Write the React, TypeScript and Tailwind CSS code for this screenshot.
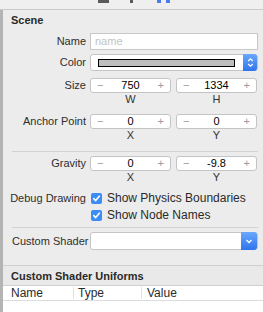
import React from "react";

const font = { fontFamily: '"Liberation Sans", Arial, sans-serif' };

function Stepper({ value }: { value: string }) {
  return (
    <div className="flex h-[15px] w-[81px] items-center rounded-[3px] border border-[#c4c4c4] bg-white px-[6px] text-[11px] leading-none">
      <span className="text-[#9a9a9a]">−</span>
      <span className="flex-1 text-center text-black">{value}</span>
      <span className="text-[#9a9a9a]">+</span>
    </div>
  );
}

function StepperPair({ a, b, la, lb }: { a: string; b: string; la: string; lb: string }) {
  return (
    <div className="flex flex-col">
      <div className="flex gap-[5px]">
        <Stepper value={a} />
        <Stepper value={b} />
      </div>
      <div className="flex gap-[5px] text-[11px] leading-[12px] text-[#333]">
        <div className="w-[81px] text-center">{la}</div>
        <div className="w-[81px] text-center">{lb}</div>
      </div>
    </div>
  );
}

function Check() {
  return (
    <div className="flex h-[11px] w-[11px] items-center justify-center rounded-[2px] bg-[#3b8df5]">
      <svg width="9" height="9" viewBox="0 0 9 9">
        <path d="M1.8 4.6 L3.7 6.6 L7.3 2.2" fill="none" stroke="white" strokeWidth="1.6" strokeLinecap="round" strokeLinejoin="round" />
      </svg>
    </div>
  );
}

export default function App() {
  return (
    <div className="flex h-[312px] w-[263px] flex-col overflow-hidden bg-[#ececec] text-[11px] text-[#2e2e2e]" style={font}>
      <div className="relative h-[10px] shrink-0 border-b border-[#c9c9c9] bg-[#efefef]">
        <div className="absolute left-[98px] top-0 h-[3px] w-[11px] bg-[#5a5a5a]" />
        <div className="absolute left-[130px] top-0 h-[3px] w-[3px] bg-[#5a5a5a]" />
        <div className="absolute left-[157px] top-0 h-[3px] w-[4px] bg-[#4a7de8]" />
        <div className="absolute left-[166px] top-0 h-[3px] w-[4px] bg-[#4a7de8]" />
      </div>
      <div className="flex flex-1">
        <div className="w-[3px] shrink-0 bg-[#b4b4b4]" />
        <div className="flex flex-1 flex-col">
          <div className="pl-[8px] pt-[4px] text-[11px] font-bold leading-[13px] text-[#2a2a2a]">Scene</div>

          <div className="mt-[6px] flex items-center">
            <div className="w-[83px] text-right">Name</div>
            <div className="ml-[4px] flex h-[17px] w-[168px] items-center border border-[#c8c8c8] bg-white px-[4px] text-[#c2c2c2]">name</div>
          </div>

          <div className="mt-[4px] flex items-center">
            <div className="w-[83px] text-right">Color</div>
            <div className="ml-[4px] flex h-[17px] w-[168px] items-center rounded-[3px] border border-[#c4c4c4] bg-white">
              <div className="ml-[7px] h-[8px] w-[137px] border border-black bg-[#bdbdbd]" />
              <div className="ml-auto flex h-[17px] w-[14px] items-center justify-center rounded-r-[3px] bg-gradient-to-b from-[#6aa8fa] to-[#2f74ec]">
                <svg width="7" height="11" viewBox="0 0 7 11">
                  <path d="M1.2 4 L3.5 1.8 L5.8 4 M1.2 7 L3.5 9.2 L5.8 7" fill="none" stroke="white" strokeWidth="1.2" />
                </svg>
              </div>
            </div>
          </div>

          <div className="mt-[7px] flex items-start">
            <div className="w-[83px] pt-[1px] text-right leading-[13px]">Size</div>
            <div className="ml-[4px]">
              <StepperPair a="750" b="1334" la="W" lb="H" />
            </div>
          </div>

          <div className="mt-[9px] flex items-start">
            <div className="w-[83px] pt-[1px] text-right leading-[13px]">Anchor Point</div>
            <div className="ml-[4px]">
              <StepperPair a="0" b="0" la="X" lb="Y" />
            </div>
          </div>

          <div className="ml-[9px] mr-[5px] mt-[10px] h-px bg-[#d2d2d2]" />

          <div className="mt-[4px] flex items-start">
            <div className="w-[83px] pt-[1px] text-right leading-[13px]">Gravity</div>
            <div className="ml-[4px]">
              <StepperPair a="0" b="-9.8" la="X" lb="Y" />
            </div>
          </div>

          <div className="mt-[8px] flex h-[14px] items-center">
            <div className="w-[83px] text-right">Debug Drawing</div>
            <div className="ml-[5px] flex items-center gap-[5px]">
              <Check />
              <span className="text-[12px] text-[#2a2a2a]">Show Physics Boundaries</span>
            </div>
          </div>

          <div className="mt-[3px] flex h-[14px] items-center">
            <div className="ml-[88px] flex items-center gap-[5px]">
              <Check />
              <span className="text-[12px] text-[#2a2a2a]">Show Node Names</span>
            </div>
          </div>

          <div className="ml-[9px] mr-[5px] mt-[5px] h-px bg-[#d2d2d2]" />

          <div className="mt-[4px] flex items-center">
            <div className="w-[83px] whitespace-nowrap pl-[9px] text-left">Custom Shader</div>
            <div className="ml-[4px] flex h-[18px] w-[168px] items-center rounded-[3px] border border-[#c4c4c4] bg-white">
              <div className="ml-auto flex h-[18px] w-[16px] items-center justify-center rounded-r-[3px] bg-gradient-to-b from-[#6aa8fa] to-[#2f74ec]">
                <svg width="8" height="8" viewBox="0 0 8 8">
                  <path d="M1.5 3 L4 5.5 L6.5 3" fill="none" stroke="white" strokeWidth="1.3" />
                </svg>
              </div>
            </div>
          </div>

          <div className="mt-[15px] h-px bg-[#cfcfcf]" />
          <div className="flex h-[19px] items-center bg-[#e9e9e9] pl-[8px] pt-[1px] font-bold text-[#2a2a2a]">Custom Shader Uniforms</div>
          <div className="h-px bg-[#cfcfcf]" />
          <div className="flex flex-1 flex-col bg-white">
            <div className="flex h-[15px] items-center border-b border-[#dcdcdc] text-[12px] text-[#2a2a2a]">
              <div className="w-[70px] pl-[8px]">Name</div>
              <div className="h-[12px] w-px bg-[#e2e2e2]" />
              <div className="w-[67px] pl-[4px]">Type</div>
              <div className="h-[12px] w-px bg-[#e2e2e2]" />
              <div className="pl-[5px]">Value</div>
            </div>
          </div>
        </div>
      </div>
    </div>
  );
}
